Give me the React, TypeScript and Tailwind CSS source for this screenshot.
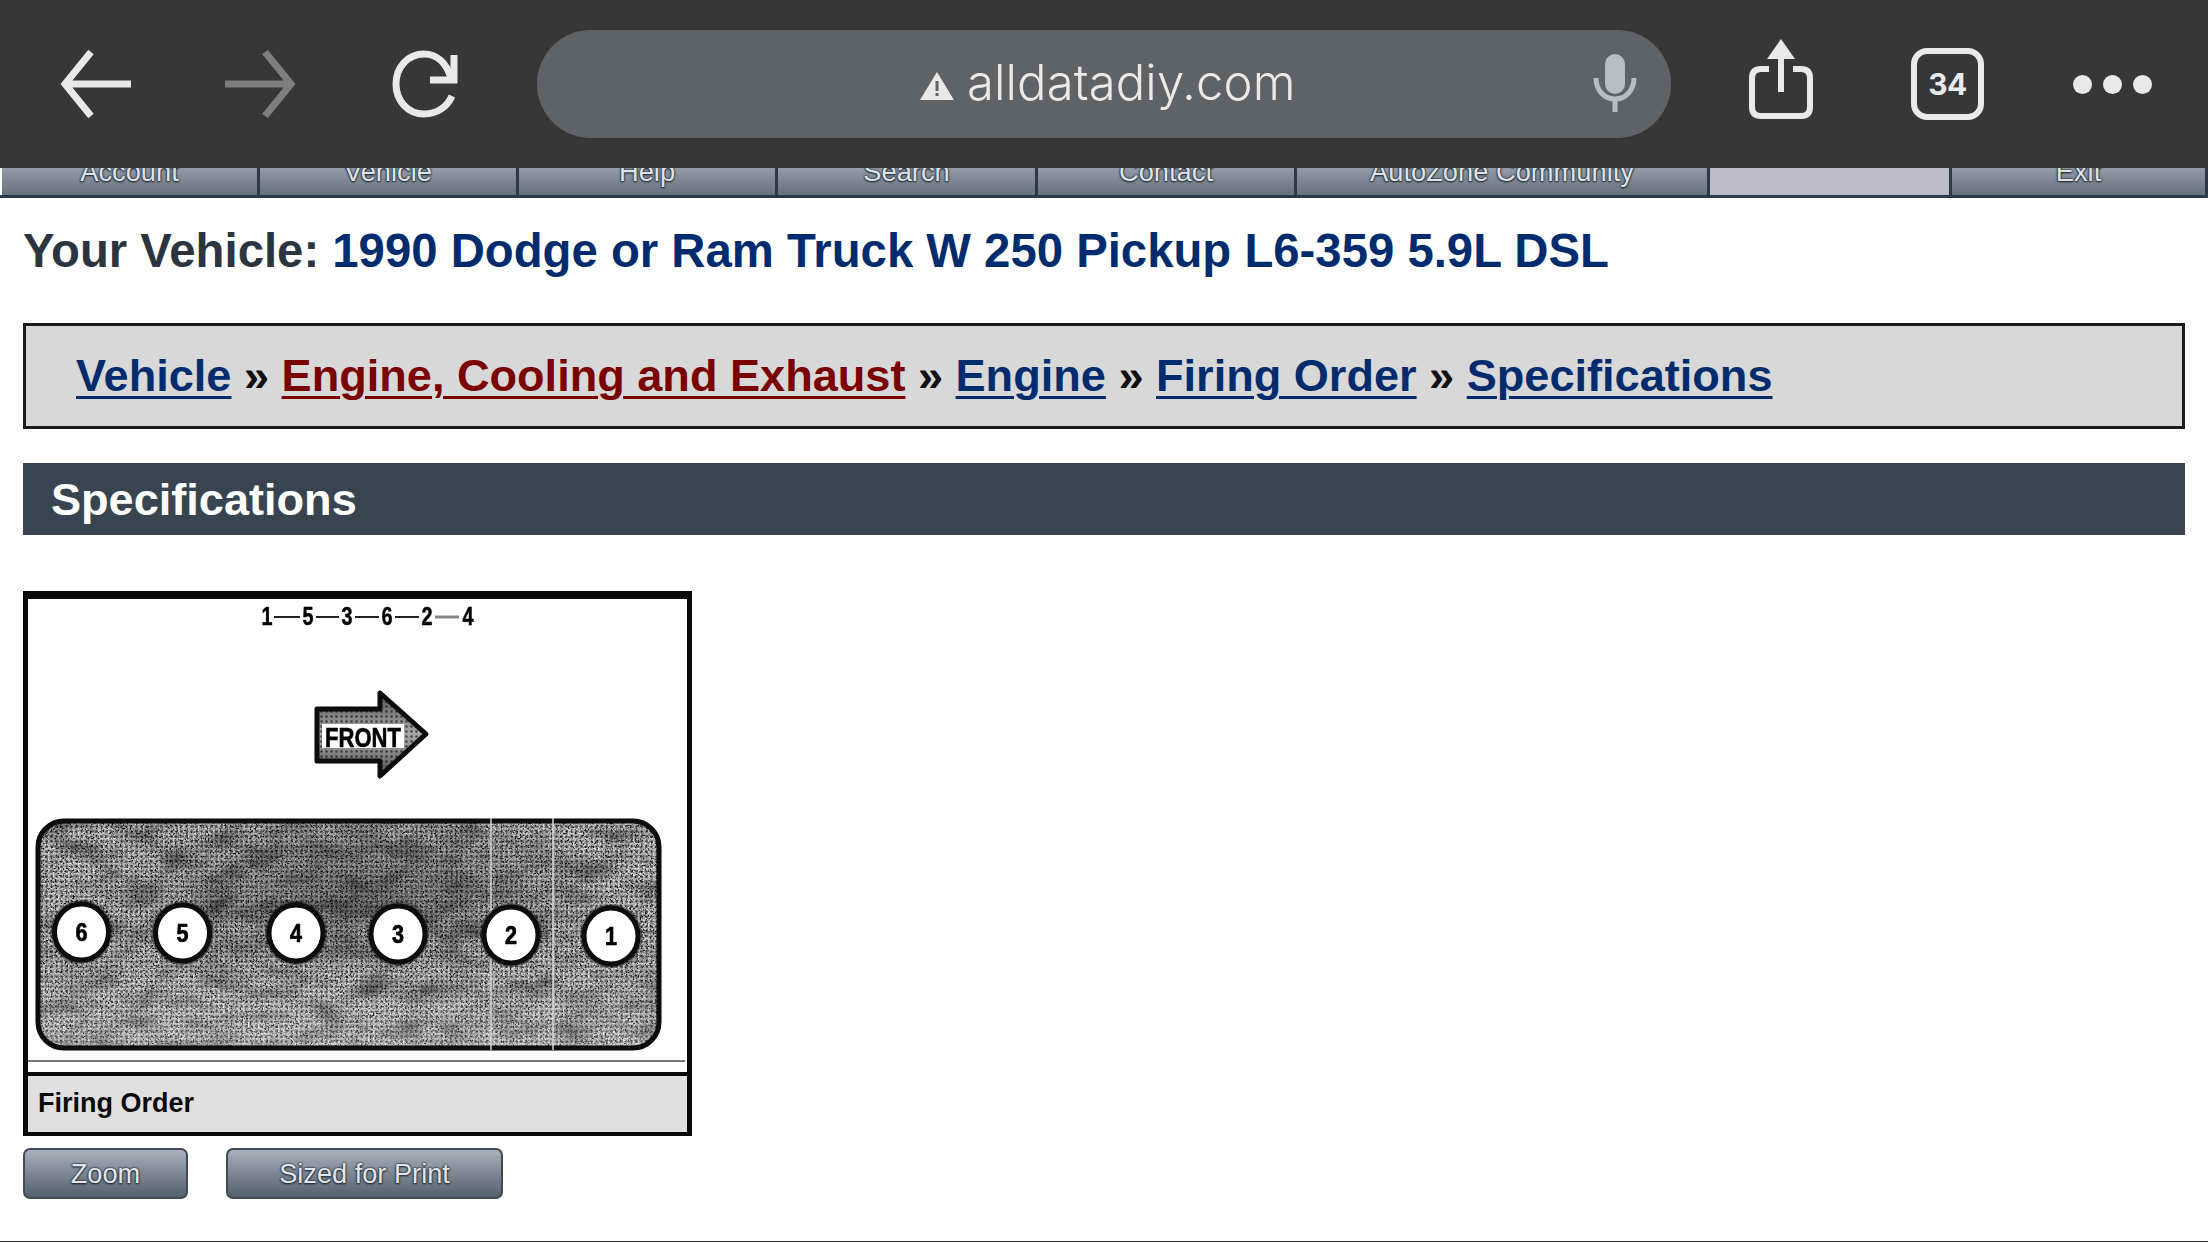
const tabs = [
  { label: "Account", width: "w-[258px]" },
  { label: "Vehicle", width: "w-[259px]" },
  { label: "Help", width: "w-[259px]" },
  { label: "Search", width: "w-[260px]" },
  { label: "Contact", width: "w-[259px]" },
  { label: "AutoZone Community", width: "w-[413px]" },
  { label: "", width: "w-[242px]" },
  { label: "Exit", width: "w-[256px]" },
];

const crumbs = [
  { label: "Vehicle", color: "text-[#002c6e]" },
  { label: "Engine, Cooling and Exhaust", color: "text-[#7a0000]" },
  { label: "Engine", color: "text-[#002c6e]" },
  { label: "Firing Order", color: "text-[#002c6e]" },
  { label: "Specifications", color: "text-[#002c6e]" },
];

const cylinders = [
  { n: "6", x: 81.5, y: 932 },
  { n: "5", x: 182.5, y: 933 },
  { n: "4", x: 296, y: 933 },
  { n: "3", x: 398, y: 934 },
  { n: "2", x: 511, y: 935 },
  { n: "1", x: 611, y: 936 },
];

const orderDigits = [
  { n: "1", x: 267 },
  { n: "5", x: 308 },
  { n: "3", x: 347 },
  { n: "6", x: 387 },
  { n: "2", x: 427 },
  { n: "4", x: 468 },
];

const bevelText = "[text-shadow:0_0_2px_#1f2a35,0_0_2px_#1f2a35,0_1px_2px_#1f2a35]";

const Toolbar = () => {
  return (
    <div className="h-[168px] bg-[#36373b] flex items-center">
      <svg className="ml-[57px] w-[78px] h-[72px]" viewBox="0 0 78 72" fill="none">
        <path d="M74 36H8M34 4 8 36l26 32" stroke="#e8e9ec" strokeWidth="7" />
      </svg>
      <svg className="ml-[86px] w-[78px] h-[72px]" viewBox="0 0 78 72" fill="none">
        <path d="M4 36h66M44 4l26 32-26 32" stroke="#7d7e80" strokeWidth="7" />
      </svg>
      <svg className="ml-[92px] w-[70px] h-[72px]" viewBox="0 0 70 72" fill="none">
        <path d="M63 7v25H39" stroke="#e8e9ec" strokeWidth="7" />
        <path d="M60 30C55 14 45 6 33 6 17 6 5 19 5 36s12 30 28 30c13 0 23-7 28-18" stroke="#e8e9ec" strokeWidth="7" />
      </svg>
      <div className="ml-[76px] w-[1134px] h-[108px] rounded-[54px] bg-[#5e6367] flex items-center relative">
        <div className="ml-[383px] flex items-center">
          <svg className="w-[34px] h-[28px] mt-[4px]" viewBox="0 0 34 28">
            <path d="M17 0 34 28H0Z" fill="#e8e9ec" />
            <path d="M15.5 9h3v10h-3zM15.5 21h3v3h-3z" fill="#5e6367" />
          </svg>
          <span className="ml-[13px] mt-[-3px] text-[49px] leading-none text-[#e9eaed] font-['Inter',sans-serif] font-light tracking-[0.1px]">
            alldatadiy.com
          </span>
        </div>
        <svg className="absolute right-[34px] top-[24px] w-[44px] h-[58px]" viewBox="0 0 44 58" fill="none">
          <rect x="12" y="0" width="20" height="40" rx="10" fill="#b8bcc4" />
          <path d="M3 24c0 12 8 21 19 21s19-9 19-21" stroke="#b8bcc4" strokeWidth="5" />
          <path d="M22 45v13" stroke="#b8bcc4" strokeWidth="5" />
        </svg>
      </div>
      <svg className="ml-[78px] w-[64px] h-[80px] mt-[-11px]" viewBox="0 0 64 80" fill="none">
        <path d="M20 30h-8C6 30 3 33 3 39v29c0 6 3 9 9 9h40c6 0 9-3 9-9V39c0-6-3-9-9-9h-8" stroke="#e8e9ec" strokeWidth="6" />
        <path d="M32 6v47" stroke="#e8e9ec" strokeWidth="6" />
        <path d="M32 0 46 20H18Z" fill="#e8e9ec" />
      </svg>
      <div className="ml-[98px] w-[73px] h-[72px] rounded-[16px] border-[6px] border-[#e8e9ec] flex items-center justify-center mt-[-1px]">
        <span className="text-[30px] font-bold leading-none text-[#e8e9ec] font-['Inter',sans-serif] tracking-[-0.5px]">34</span>
      </div>
      <div className="ml-[89px] flex items-center gap-[11px]">
        <div className="w-[19px] h-[19px] rounded-full bg-[#e8e9ec]" />
        <div className="w-[19px] h-[19px] rounded-full bg-[#e8e9ec]" />
        <div className="w-[19px] h-[19px] rounded-full bg-[#e8e9ec]" />
      </div>
    </div>
  );
};

const FiringDiagram = () => {
  return (
    <svg className="block w-[659px] h-[473px]" viewBox="28 599 659 473">
      <defs>
        <filter id="grain" x="0" y="0" width="100%" height="100%">
          <feTurbulence type="fractalNoise" baseFrequency="0.6" numOctaves="2" seed="7" />
          <feColorMatrix type="matrix" values="1.6 1.6 0 0 -1.15  1.6 1.6 0 0 -1.15  1.6 1.6 0 0 -1.15  0 0 0 0 1" />
        </filter>
        <filter id="mottle" x="0" y="0" width="100%" height="100%">
          <feTurbulence type="fractalNoise" baseFrequency="0.025 0.05" numOctaves="3" seed="21" />
          <feColorMatrix type="matrix" values="0 0 0 0 0  0 0 0 0 0  0 0 0 0 0  1.1 1.1 0 0 -0.95" />
        </filter>
        <pattern id="dots" width="5" height="5" patternUnits="userSpaceOnUse">
          <circle cx="1.5" cy="1.5" r="1.3" fill="#0a0a0a" opacity="0.6" />
        </pattern>
        <radialGradient id="shade" cx="0.52" cy="0.3" r="0.42">
          <stop offset="0" stopColor="#000" stopOpacity="0.35" />
          <stop offset="1" stopColor="#000" stopOpacity="0" />
        </radialGradient>
        <linearGradient id="lift" x1="0" y1="0" x2="0" y2="1">
          <stop offset="0.6" stopColor="#fff" stopOpacity="0" />
          <stop offset="1" stopColor="#fff" stopOpacity="0.18" />
        </linearGradient>
        <linearGradient id="arrowFill" x1="0" y1="0" x2="0" y2="1">
          <stop offset="0" stopColor="#555" />
          <stop offset="0.5" stopColor="#aaa" />
          <stop offset="1" stopColor="#555" />
        </linearGradient>
        <clipPath id="plate">
          <rect x="38" y="821" width="621" height="227" rx="26" />
        </clipPath>
        <clipPath id="arrow">
          <path d="M317 709H380V693L426 734 380 776V761H317Z" />
        </clipPath>
        <filter id="soft">
          <feGaussianBlur stdDeviation="0.7" />
        </filter>
      </defs>

      <rect x="28" y="599" width="659" height="473" fill="#fff" />

      <g filter="url(#soft)">
        <path d="M274 617H300M316 617H339M355 617H379M395 617H419" stroke="#222" strokeWidth="2" />
        <path d="M435 617H459" stroke="#888" strokeWidth="3" />
        {orderDigits.map((d) => (
          <text
            key={d.n}
            x={d.x}
            y="625"
            textAnchor="middle"
            fontFamily="Liberation Sans, sans-serif"
            fontWeight="700"
            fontSize="25"
            textLength="11"
            lengthAdjust="spacingAndGlyphs"
            fill="#000"
            stroke="#000"
            strokeWidth="0.5"
          >
            {d.n}
          </text>
        ))}

        <path d="M317 709H380V693L426 734 380 776V761H317Z" fill="url(#arrowFill)" />
        <g clipPath="url(#arrow)">
          <rect x="317" y="693" width="110" height="84" fill="url(#dots)" />
        </g>
        <path d="M317 709H380V693L426 734 380 776V761H317Z" fill="none" stroke="#0a0a0a" strokeWidth="5" strokeLinejoin="round" />
        <rect x="322" y="724" width="82" height="24" fill="#fff" />
        <text x="363" y="747" textAnchor="middle" fontFamily="Liberation Sans, sans-serif" fontWeight="700" fontSize="27" textLength="76" lengthAdjust="spacingAndGlyphs" fill="#000" stroke="#000" strokeWidth="0.6">
          FRONT
        </text>

        <g clipPath="url(#plate)">
          <rect x="38" y="821" width="621" height="227" fill="#8a8a8a" />
          <rect x="38" y="821" width="621" height="227" filter="url(#grain)" opacity="0.8" />
          <rect x="38" y="821" width="621" height="227" fill="url(#dots)" />
          <rect x="38" y="821" width="621" height="227" filter="url(#mottle)" opacity="0.6" />
          <rect x="38" y="821" width="621" height="227" fill="url(#shade)" />
          <rect x="38" y="821" width="621" height="227" fill="url(#lift)" />
        </g>
        <rect x="38" y="821" width="621" height="227" rx="26" fill="none" stroke="#0a0a0a" strokeWidth="5" />
        <path d="M491 818v232M553 818v232" stroke="#d8d8d8" strokeWidth="1.5" />

        {cylinders.map((c) => (
          <g key={c.n}>
            <ellipse cx={c.x} cy={c.y} rx="31" ry="32" fill="#0a0a0a" opacity="0.4" />
            <ellipse cx={c.x} cy={c.y} rx="27" ry="28" fill="#fff" stroke="#0a0a0a" strokeWidth="5" />
            <text
              x={c.x}
              y={c.y + 9}
              textAnchor="middle"
              fontFamily="Liberation Sans, sans-serif"
              fontWeight="700"
              fontSize="25"
              textLength="12"
              lengthAdjust="spacingAndGlyphs"
              fill="#000"
              stroke="#000"
              strokeWidth="0.7"
            >
              {c.n}
            </text>
          </g>
        ))}
      </g>

      <path d="M28 1061H685" stroke="#777" strokeWidth="2" />
    </svg>
  );
};

export default function App() {
  return (
    <div className="w-[2208px] h-[1242px] overflow-hidden bg-white font-['Liberation_Sans',Arial,sans-serif] flex flex-col">
      <Toolbar />

      <div className="flex h-[30px] pl-[2px] border-b-[3px] border-[#2c3a47]">
        {tabs.map((tab, i) => (
          <div
            key={i}
            className={`${tab.width} shrink-0 overflow-hidden text-center border-r-[3px] border-[#2c3a47] ${
              tab.label ? "bg-gradient-to-b from-[#939ba7] to-[#66727e]" : "bg-[#babdc5]"
            }`}
          >
            <div className={`-mt-[13px] text-[27.3px] leading-[34px] text-[#dfe3e8] ${bevelText}`}>{tab.label || "\u00a0"}</div>
          </div>
        ))}
      </div>

      <div className="px-[23px]">
        <h1 className="mt-[27px] text-[47.3px] leading-[52px] font-bold text-[#2a3540] whitespace-nowrap">
          Your Vehicle: <span className="text-[#002c6e]">1990 Dodge or Ram Truck W 250 Pickup L6-359 5.9L DSL</span>
        </h1>

        <div className="mt-[46px] h-[106px] bg-[#d8d8d8] border-[3px] border-[#1c1c1c] pl-[50px] flex items-center text-[45.1px] font-bold text-[#111] whitespace-pre">
          {crumbs.map((crumb, i) => (
            <span key={crumb.label}>
              {i > 0 && " » "}
              <a className={`underline underline-offset-[5px] decoration-[3px] ${crumb.color}`}>{crumb.label}</a>
            </span>
          ))}
        </div>

        <div className="mt-[34px] h-[72px] bg-[#38444f] pl-[28px] pt-[2px] flex items-center text-[45.1px] font-bold text-white">
          Specifications
        </div>

        <div className="mt-[56px] w-[669px] border-x-[5px] border-t-[8px] border-b-[4px] border-[#0a0a0a]">
          <FiringDiagram />
          <div className="h-[60px] border-t-[4px] border-[#0a0a0a] bg-[#e0e0e0] pl-[10px] pb-[2px] flex items-center text-[27px] font-bold text-[#0a0a0a]">
            Firing Order
          </div>
        </div>

        <div className="mt-[12px] flex gap-[38px]">
          <button className={`w-[165px] h-[51px] rounded-[7px] border-2 border-[#3f4b56] pt-[1px] bg-gradient-to-b from-[#a9b0ba] to-[#54616d] text-[27.2px] text-[#e2e6ea] ${bevelText}`}>
            Zoom
          </button>
          <button className={`w-[277px] h-[51px] rounded-[7px] border-2 border-[#3f4b56] pt-[1px] bg-gradient-to-b from-[#a9b0ba] to-[#54616d] text-[27.2px] text-[#e2e6ea] ${bevelText}`}>
            Sized for Print
          </button>
        </div>
      </div>

      <div className="mt-auto h-px bg-[#333]" />
    </div>
  );
}
